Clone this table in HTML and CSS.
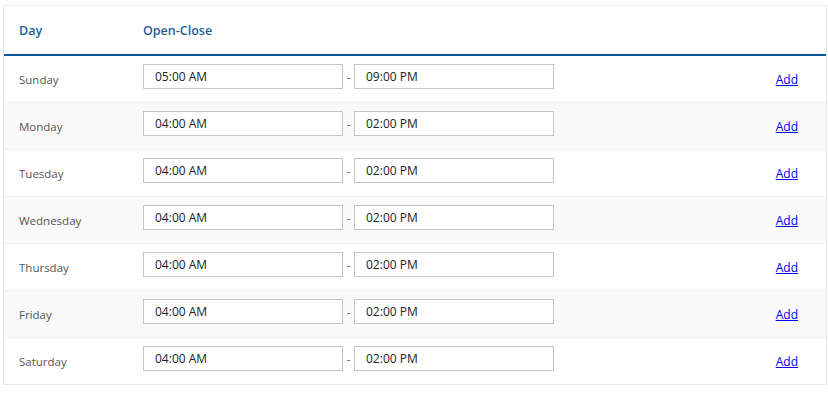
FILE: index.html
```html
<!DOCTYPE html>
<html>
<head>
<meta charset="utf-8">
<link rel="stylesheet" href="styles.css">
</head>
<body>
<div class="hours">
  <div class="head">
    <div class="c-day">Day</div>
    <div class="c-time">Open-Close</div>
  </div>
  <div class="row"><div class="c-day">Sunday</div><div class="c-time"><input class="time" value="05:00 AM"><span class="dash">-</span><input class="time" value="09:00 PM"></div><a class="add" href="#">Add</a></div>
  <div class="row alt"><div class="c-day">Monday</div><div class="c-time"><input class="time" value="04:00 AM"><span class="dash">-</span><input class="time" value="02:00 PM"></div><a class="add" href="#">Add</a></div>
  <div class="row"><div class="c-day">Tuesday</div><div class="c-time"><input class="time" value="04:00 AM"><span class="dash">-</span><input class="time" value="02:00 PM"></div><a class="add" href="#">Add</a></div>
  <div class="row alt"><div class="c-day">Wednesday</div><div class="c-time"><input class="time" value="04:00 AM"><span class="dash">-</span><input class="time" value="02:00 PM"></div><a class="add" href="#">Add</a></div>
  <div class="row"><div class="c-day">Thursday</div><div class="c-time"><input class="time" value="04:00 AM"><span class="dash">-</span><input class="time" value="02:00 PM"></div><a class="add" href="#">Add</a></div>
  <div class="row alt"><div class="c-day">Friday</div><div class="c-time"><input class="time" value="04:00 AM"><span class="dash">-</span><input class="time" value="02:00 PM"></div><a class="add" href="#">Add</a></div>
  <div class="row"><div class="c-day">Saturday</div><div class="c-time"><input class="time" value="04:00 AM"><span class="dash">-</span><input class="time" value="02:00 PM"></div><a class="add" href="#">Add</a></div>
</div>
</body>
</html>
```
FILE: styles.css
```css
html, body { margin: 0; padding: 0; background: #fff; }
body { padding: 5px 1px 0 3px; font-family: "Open Sans", "Noto Sans", sans-serif; font-size: 11.5px; color: #444; }
.hours { border: 1px solid #e8e8e8; border-top-color: #ececec; }
.head { display: flex; align-items: center; height: 48px; border-bottom: 2px solid #0b57a0; font-weight: 600; color: #1e5e9e; font-size: 12.5px; }
.c-day { width: 139px; padding-left: 15px; box-sizing: border-box; }
.c-time { display: flex; align-items: center; flex: 1; }
.row { display: flex; align-items: center; height: 46px; border-bottom: 1px solid #f0f0f0; background: #fff; }
.row:last-child { border-bottom: none; }
.row .c-day { padding-top: 1px; color: #555; }
.row .c-time { padding-bottom: 6px; }
.row.alt { background: #f9f9f9; }
.time { width: 200px; height: 25px; box-sizing: border-box; border: 1px solid #c6c3c6; background: #fff; padding: 0 0 0 11px; font-family: "Open Sans", "Noto Sans", sans-serif; font-size: 12px; color: #222; margin: 0; outline: none; }
.dash { width: 11px; text-align: center; color: #555; }
.add { margin-right: 28px; color: #0000ee; text-decoration: underline; padding-top: 1px; font-size: 12px; }
```
